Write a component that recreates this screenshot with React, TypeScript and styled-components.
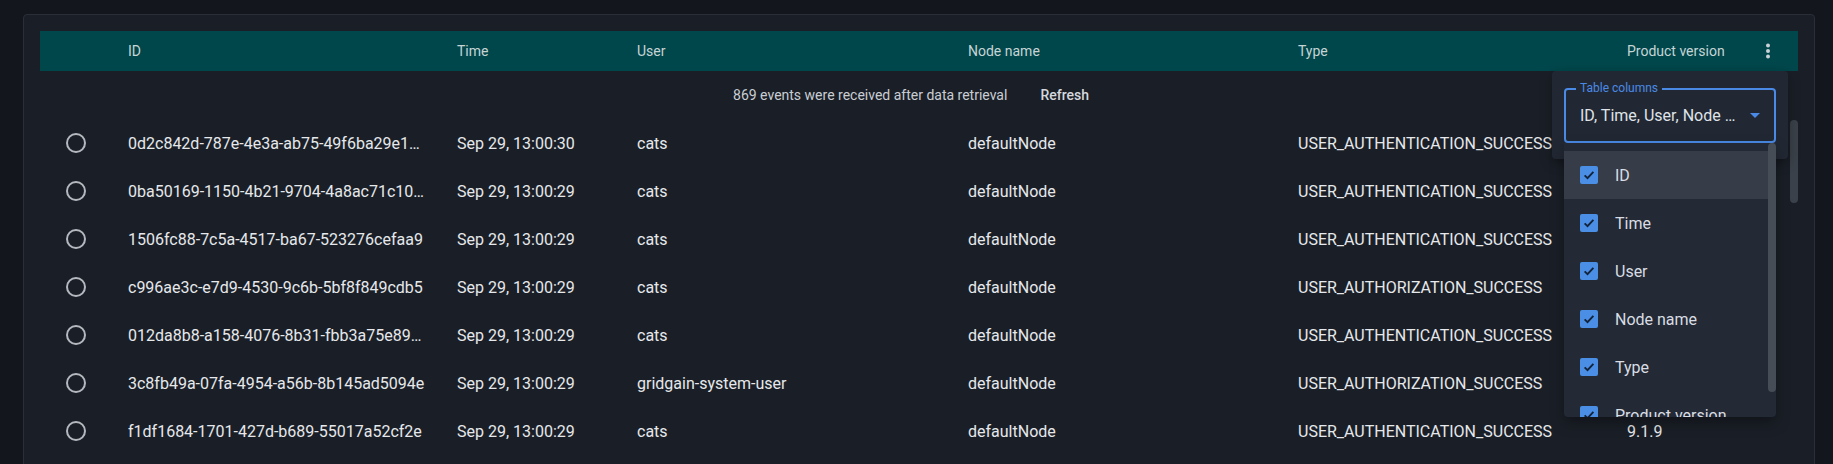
import React from 'react'
import styled, { createGlobalStyle } from 'styled-components'

const GlobalStyle = createGlobalStyle`
    body {
        margin: 0;
        background: #13171d;
        font-family: Roboto, 'Liberation Sans', sans-serif;
    }
`

const columns = '72px 329px 180px 331px 330px 329px 1fr 44px'

const Page = styled.div`
    height: 464px;
    overflow: hidden;
    padding: 14px 18px 0 23px;
    box-sizing: border-box;
`

const Panel = styled.div`
    min-height: 480px;
    background: #1a1f27;
    border: 1px solid #2a2f37;
    border-radius: 4px;
    padding: 16px 16px 0;
`

const TableWrap = styled.div`
    position: relative;
`

const HeaderRow = styled.div`
    display: grid;
    grid-template-columns: ${columns};
    height: 40px;
    align-items: center;
    padding-right: 8px;
    background: #00474b;
    color: #c6d4d5;
    font-size: 14px;
`

const Cell = styled.div`
    padding: 0 16px;
    white-space: nowrap;
    overflow: hidden;
    text-overflow: ellipsis;
`

const KebabButton = styled.div`
    display: flex;
    justify-content: center;
    align-items: center;
    color: #c9d1d9;
`

const InfoBar = styled.div`
    height: 48px;
    display: flex;
    justify-content: center;
    align-items: center;
    gap: 25px;
    padding-right: 8px;
    font-size: 14px;
    color: #c9cdd3;
`

const RefreshButton = styled.button`
    background: none;
    border: none;
    padding: 6px 8px;
    font-family: inherit;
    font-size: 14px;
    font-weight: 500;
    color: #d4d8de;
`

const Body = styled.div`
    position: relative;
`

const Row = styled.div`
    display: grid;
    grid-template-columns: ${columns};
    height: 48px;
    align-items: center;
    padding-right: 8px;
    font-size: 16px;
    color: #e6e8eb;
`

const RadioCell = styled.div`
    display: flex;
    justify-content: center;
`

const Radio = styled.span`
    width: 20px;
    height: 20px;
    box-sizing: border-box;
    border: 2px solid #b5b9bf;
    border-radius: 50%;
`

const ScrollThumb = styled.div<{ $top: number; $height: number }>`
    position: absolute;
    right: 0;
    top: ${({ $top }) => $top}px;
    width: 8px;
    height: ${({ $height }) => $height}px;
    border-radius: 4px;
    background: ${({ $height }) => ($height > 200 ? '#474d57' : '#3b414a')};
`

const ColumnsPopover = styled.div`
    position: absolute;
    left: 1512px;
    top: 40px;
    width: 236px;
    height: 88px;
    box-sizing: border-box;
    padding: 17px 12px 0;
    background: #222833;
    border-radius: 4px;
    box-shadow: 0 4px 12px rgba(0, 0, 0, 0.35);
`

const SelectField = styled.div`
    position: relative;
    height: 55px;
    box-sizing: border-box;
    display: flex;
    align-items: center;
    padding: 0 14px;
    border: 2px solid #4a8ae6;
    border-radius: 4px;
`

const SelectLabel = styled.span`
    position: absolute;
    top: -10px;
    left: 10px;
    padding: 0 4px;
    font-size: 12px;
    line-height: 16px;
    color: #4a8ae6;
    background: #222833;
`

const SelectValue = styled.span`
    flex: 1;
    min-width: 0;
    margin-right: 14px;
    white-space: nowrap;
    overflow: hidden;
    text-overflow: ellipsis;
    font-size: 16px;
    color: #dfe3e8;
`

const Caret = styled.span`
    margin-left: -2px;
    border-left: 5px solid transparent;
    border-right: 5px solid transparent;
    border-top: 5px solid #4a8ae6;
`

const ColumnsMenu = styled.div`
    position: absolute;
    left: 1524px;
    top: 112px;
    width: 212px;
    height: 274px;
    box-sizing: border-box;
    padding-top: 8px;
    overflow: hidden;
    background: #232a35;
    border-radius: 0 0 4px 4px;
    box-shadow: 0 6px 14px rgba(0, 0, 0, 0.35);
`

const MenuItem = styled.div<{ $active?: boolean }>`
    height: 48px;
    display: flex;
    align-items: center;
    gap: 17px;
    padding-left: 16px;
    font-size: 16px;
    color: #d9dde3;
    background: ${({ $active }) => ($active ? '#363c48' : 'transparent')};
`

const CheckBox = styled.span`
    width: 18px;
    height: 18px;
    border-radius: 2px;
    background: #4a8ee6;
    display: flex;
    align-items: center;
    justify-content: center;
`

const rows = [
    ['0d2c842d-787e-4e3a-ab75-49f6ba29e1b3', 'Sep 29, 13:00:30', 'cats', 'USER_AUTHENTICATION_SUCCESS'],
    ['0ba50169-1150-4b21-9704-4a8ac71c10d2', 'Sep 29, 13:00:29', 'cats', 'USER_AUTHENTICATION_SUCCESS'],
    ['1506fc88-7c5a-4517-ba67-523276cefaa9', 'Sep 29, 13:00:29', 'cats', 'USER_AUTHENTICATION_SUCCESS'],
    ['c996ae3c-e7d9-4530-9c6b-5bf8f849cdb5', 'Sep 29, 13:00:29', 'cats', 'USER_AUTHORIZATION_SUCCESS'],
    ['012da8b8-a158-4076-8b31-fbb3a75e89c4', 'Sep 29, 13:00:29', 'cats', 'USER_AUTHENTICATION_SUCCESS'],
    ['3c8fb49a-07fa-4954-a56b-8b145ad5094e', 'Sep 29, 13:00:29', 'gridgain-system-user', 'USER_AUTHORIZATION_SUCCESS'],
    ['f1df1684-1701-427d-b689-55017a52cf2e', 'Sep 29, 13:00:29', 'cats', 'USER_AUTHENTICATION_SUCCESS'],
]

const columnNames = ['ID', 'Time', 'User', 'Node name', 'Type', 'Product version']

const Check = () => (
    <svg width="14" height="14" viewBox="0 0 24 24">
        <path d="M4.5 12.5l5 5 10-11" fill="none" stroke="#13233a" strokeWidth="3.2" />
    </svg>
)

const Kebab = () => (
    <svg width="6" height="16" viewBox="0 0 6 16">
        <circle cx="3" cy="2.5" r="2" fill="currentColor" />
        <circle cx="3" cy="8" r="2" fill="currentColor" />
        <circle cx="3" cy="13.5" r="2" fill="currentColor" />
    </svg>
)

const App = () => {
    return (
        <>
            <GlobalStyle />
            <Page>
                <Panel>
                    <TableWrap>
                        <HeaderRow>
                            <span />
                            {columnNames.map((name) => (
                                <Cell key={name}>{name}</Cell>
                            ))}
                            <KebabButton>
                                <Kebab />
                            </KebabButton>
                        </HeaderRow>
                        <InfoBar>
                            <span>869 events were received after data retrieval</span>
                            <RefreshButton>Refresh</RefreshButton>
                        </InfoBar>
                        <Body>
                            {rows.map(([id, time, user, type]) => (
                                <Row key={id}>
                                    <RadioCell>
                                        <Radio />
                                    </RadioCell>
                                    <Cell>{id}</Cell>
                                    <Cell>{time}</Cell>
                                    <Cell>{user}</Cell>
                                    <Cell>defaultNode</Cell>
                                    <Cell>{type}</Cell>
                                    <Cell>9.1.9</Cell>
                                </Row>
                            ))}
                            <ScrollThumb $top={1} $height={83} />
                        </Body>
                        <ColumnsPopover>
                            <SelectField>
                                <SelectLabel>Table columns</SelectLabel>
                                <SelectValue>{columnNames.join(', ')}</SelectValue>
                                <Caret />
                            </SelectField>
                        </ColumnsPopover>
                        <ColumnsMenu>
                            {columnNames.map((name, i) => (
                                <MenuItem key={name} $active={i === 0}>
                                    <CheckBox>
                                        <Check />
                                    </CheckBox>
                                    {name}
                                </MenuItem>
                            ))}
                            <ScrollThumb $top={0} $height={249} />
                        </ColumnsMenu>
                    </TableWrap>
                </Panel>
            </Page>
        </>
    )
}

export default App
